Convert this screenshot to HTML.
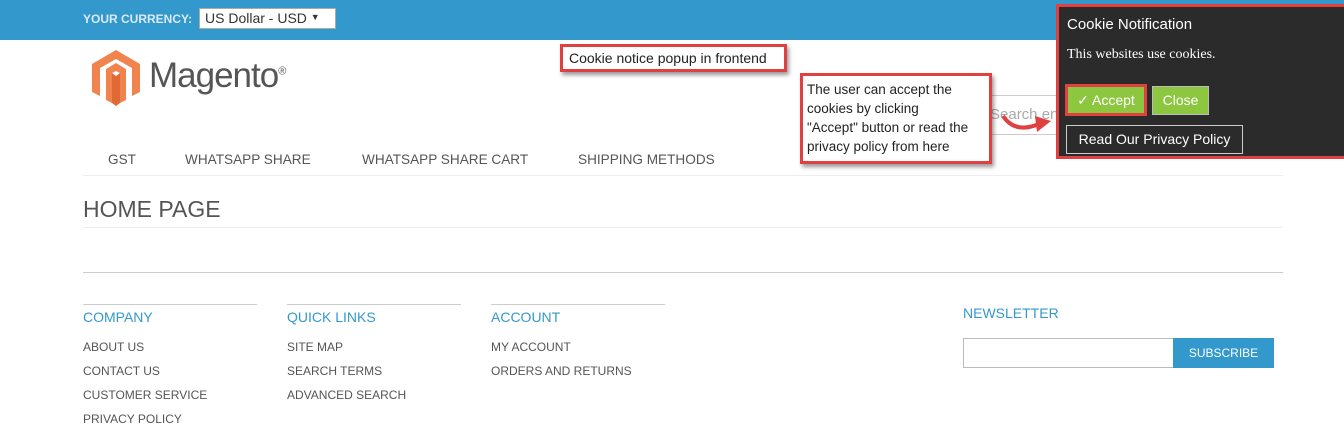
<!DOCTYPE html>
<html><head><meta charset="utf-8"><style>
*{margin:0;padding:0;box-sizing:border-box}
body{width:1344px;height:433px;overflow:hidden;background:#fff;font-family:"Liberation Sans",sans-serif;position:relative;color:#555}
.abs{position:absolute}
.top{left:0;top:0;width:1344px;height:40px;background:#3399cc}
.nav{font-size:13.6px;color:#555;top:152px}
.fh{font-size:14px;color:#3399cc;top:309px}
.fl{font-size:12px;color:#555}
.line{height:1px;background:#ccc}
.ann{background:#fff;border:3px solid #e04040;box-shadow:2px 3px 4px rgba(0,0,0,.4);font-size:14px;color:#222;padding:2px 6px;line-height:21px;white-space:nowrap}
</style></head><body>
<div class="abs top"></div>
<div class="abs" style="left:83px;top:12px;font-size:12px;font-weight:bold;color:#dbe9f3">YOUR CURRENCY:</div>
<div class="abs" style="left:199px;top:8px;width:137px;height:21px;background:#fff;border:1px solid #aaa;font-size:14px;color:#333;padding:1px 5px">US Dollar - USD <span style="font-size:9px;position:relative;top:-3px">▼</span></div>
<svg class="abs" style="left:92px;top:50px" width="48" height="56" viewBox="0 0 48 56"><path d="M24 0L48 14V42L40 46V18L24 9L8 18V46L0 42V14Z" fill="#f1834e"/><path d="M24 13L34 19V50L28 53V23L24 21L20 23V53L14 50V19Z" fill="#f1834e"/><path d="M20 23V53L24 56L28 53V23L24 26Z" fill="#e06a35"/></svg>
<div class="abs" style="left:149px;top:56px;font-size:35px;color:#555;letter-spacing:-1px">Magento<sup style="font-size:11px">®</sup></div>
<div class="abs nav" style="left:108px">GST</div>
<div class="abs nav" style="left:185px">WHATSAPP SHARE</div>
<div class="abs nav" style="left:362px">WHATSAPP SHARE CART</div>
<div class="abs nav" style="left:578px">SHIPPING METHODS</div>
<div class="abs line" style="left:83px;top:175px;width:1200px;background:#eee"></div>
<div class="abs" style="left:83px;top:196px;font-size:23px;color:#555">HOME PAGE</div>
<div class="abs line" style="left:83px;top:227px;width:1200px;background:#eee"></div>
<div class="abs line" style="left:83px;top:272px;width:1200px"></div>
<div class="abs line" style="left:83px;top:304px;width:174px"></div>
<div class="abs line" style="left:287px;top:304px;width:174px"></div>
<div class="abs line" style="left:491px;top:304px;width:174px"></div>
<div class="abs fh" style="left:83px">COMPANY</div>
<div class="abs fh" style="left:287px">QUICK LINKS</div>
<div class="abs fh" style="left:491px">ACCOUNT</div>
<div class="abs fh" style="left:963px;top:305px">NEWSLETTER</div>
<div class="abs fl" style="left:83px;top:340px">ABOUT US</div>
<div class="abs fl" style="left:83px;top:364px">CONTACT US</div>
<div class="abs fl" style="left:83px;top:388px">CUSTOMER SERVICE</div>
<div class="abs fl" style="left:83px;top:412px">PRIVACY POLICY</div>
<div class="abs fl" style="left:287px;top:340px">SITE MAP</div>
<div class="abs fl" style="left:287px;top:364px">SEARCH TERMS</div>
<div class="abs fl" style="left:287px;top:388px">ADVANCED SEARCH</div>
<div class="abs fl" style="left:491px;top:340px">MY ACCOUNT</div>
<div class="abs fl" style="left:491px;top:364px">ORDERS AND RETURNS</div>
<div class="abs" style="left:963px;top:338px;width:211px;height:30px;border:1px solid #bbb"></div>
<div class="abs" style="left:1173px;top:338px;width:101px;height:30px;background:#3399cc;color:#fff;font-size:12px;text-align:center;line-height:30px">SUBSCRIBE</div>
<div class="abs" style="left:990px;top:95px;width:70px;height:40px;border-top:1px solid #ccc;border-bottom:1px solid #ccc;font-size:15px;color:#aaa;padding-top:10px;overflow:hidden;white-space:nowrap">Search en</div>
<svg class="abs" style="left:995px;top:108px" width="60" height="30"><path d="M8 8Q20 26 44 16" stroke="#e04040" stroke-width="4" fill="none"/><path d="M40 8L56 13L42 24Z" fill="#e04040"/></svg>
<div class="abs ann" style="left:560px;top:44px;width:227px;height:28px;line-height:18px">Cookie notice popup in frontend</div>
<div class="abs ann" style="left:800px;top:73px;width:192px;height:91px;line-height:19px;padding:4px 4px;font-size:13.5px">The user can accept the<br>cookies by clicking<br>"Accept" button or read the<br>privacy policy from here</div>
<div class="abs" style="left:1056px;top:4px;width:288px;height:155px;background:#2b2b2b;border:3px solid #e04040;border-right:none"></div>
<div class="abs" style="left:1067px;top:16px;font-size:15px;color:#fff">Cookie Notification</div>
<div class="abs" style="left:1067px;top:47px;font-size:14px;color:#fff;font-family:'Liberation Serif',serif">This websites use cookies.</div>
<div class="abs" style="left:1065px;top:84px;width:82px;height:32px;border:3px solid #e04040;background:#8dc63f;color:#fff;font-size:14px;text-align:center;line-height:26px">✓ Accept</div>
<div class="abs" style="left:1152px;top:86px;width:57px;height:29px;border:1px solid #bbb;background:#8dc63f;color:#fff;font-size:14px;text-align:center;line-height:27px">Close</div>
<div class="abs" style="left:1066px;top:125px;width:177px;height:29px;border:1px solid #ccc;color:#fff;font-size:14px;text-align:center;line-height:27px">Read Our Privacy Policy</div>
</body></html>
